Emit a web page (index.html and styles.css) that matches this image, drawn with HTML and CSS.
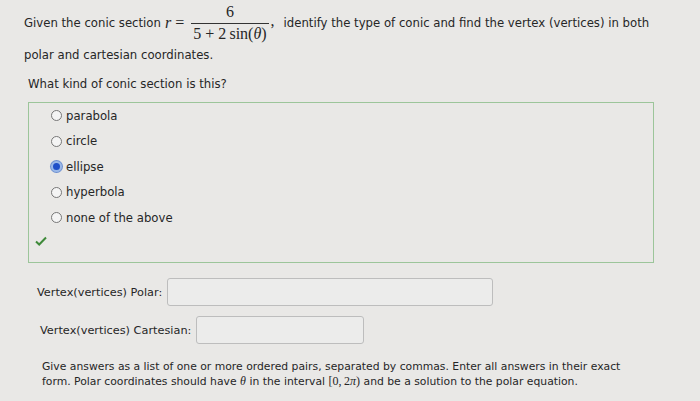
FILE: index.html
```html
<!DOCTYPE html>
<html>
<head>
<meta charset="utf-8">
<link rel="stylesheet" href="styles.css">
</head>
<body>
<div class="page">
  <div class="intro">
    <div class="line1">
      <span class="txt">Given the conic section</span>
      <span class="math"><i class="var">r</i><span class="eq">=</span>
        <span class="frac"><span class="num">6</span><span class="den">5 + 2&#8201;sin(<i>θ</i>)</span></span><span class="comma">,</span>
      </span>
      <span class="txt">identify the type of conic and find the vertex (vertices) in both</span>
    </div>
    <div class="line2">polar and cartesian coordinates.</div>
  </div>
  <div class="question">What kind of conic section is this?</div>
  <div class="box">
    <ul class="options">
      <li><span class="radio"></span>parabola</li>
      <li><span class="radio"></span>circle</li>
      <li><span class="radio checked"></span>ellipse</li>
      <li><span class="radio"></span>hyperbola</li>
      <li><span class="radio"></span>none of the above</li>
    </ul>
    <svg class="check" width="12" height="10" viewBox="0 0 12 10"><path d="M1 5.5 L4.2 8.5 L11 1.5" fill="none" stroke="#3f8a3a" stroke-width="2"/></svg>
  </div>
  <div class="field polar"><label>Vertex(vertices) Polar:</label><span class="input wide"></span></div>
  <div class="field cart"><label>Vertex(vertices) Cartesian:</label><span class="input narrow"></span></div>
  <div class="help">
    <div class="hl">Give answers as a list of one or more ordered pairs, separated by commas. Enter all answers in their exact</div>
    <div class="hl"><span>form. Polar coordinates should have</span><i class="m">θ</i><span>in the interval</span><span class="m">[0,&#8201;2<i>π</i>)</span><span>and be a solution to the polar equation.</span></div>
  </div>
</div>
</body>
</html>
```
FILE: styles.css
```css
html, body { margin: 0; padding: 0; }
body {
  width: 700px; height: 401px; overflow: hidden;
  background: #e9e8e6;
  font-family: "DejaVu Sans", Verdana, sans-serif;
  font-size: 11.7px;
  color: #262626;
}
.page { padding: 2px 0 0 24px; }
.line1 { display: flex; align-items: center; height: 42px; }
.line1 .txt { white-space: nowrap; }
.math { display: inline-flex; align-items: center; font-family: "Liberation Serif", "DejaVu Serif", serif; font-size: 16px; margin: 0 5px 0 4px; }
.var { margin-right: 4px; }
.eq { margin-right: 7px; }
.frac { display: inline-flex; flex-direction: column; align-items: center; }
.num { padding: 0 0 3px; line-height: 16px; }
.den { border-top: 1px solid #333; padding: 2px 2px 0; line-height: 16px; }
.comma { align-self: flex-end; margin: 0 4px 12px 2px; }
.line2 { margin-top: 3px; line-height: 16px; }
.question { margin: 13px 0 0 4px; line-height: 16px; }
.box {
  margin: 10px 0 0 4px; width: 626px; height: 161px; box-sizing: border-box;
  border: 1px solid #9cc59a; position: relative;
}
.options { list-style: none; margin: 0; padding: 0 0 0 22px; }
.options li { display: flex; align-items: center; height: 25.5px; }
.radio {
  width: 11px; height: 11px; border-radius: 50%; border: 1px solid #777; background: #f4f4f4;
  margin-right: 4px; box-sizing: border-box; flex: none;
}
.radio.checked { border: 2.5px solid #9ab8e8; background: #1f4fc8; box-shadow: 0 0 0 1px #6d8fd0; }
.check { position: absolute; left: 6px; bottom: 16px; }
.field { display: flex; align-items: center; font-size: 11.3px; }
.field label { margin-right: 5px; }
.polar { margin: 15px 0 0 13px; }
.cart { margin: 10px 0 0 16px; }
.input { display: block; height: 28px; border: 1px solid #bdbdbd; border-radius: 3px; background: #ececeb; box-sizing: border-box; }
.wide { width: 326px; }
.narrow { width: 168px; }
.help { margin: 16px 0 0 18px; font-size: 10.8px; }
.hl { display: flex; align-items: baseline; gap: 3.5px; height: 14px; line-height: 14px; white-space: nowrap; }
.m { font-family: "Liberation Serif", "DejaVu Serif", serif; font-size: 12px; }
```
